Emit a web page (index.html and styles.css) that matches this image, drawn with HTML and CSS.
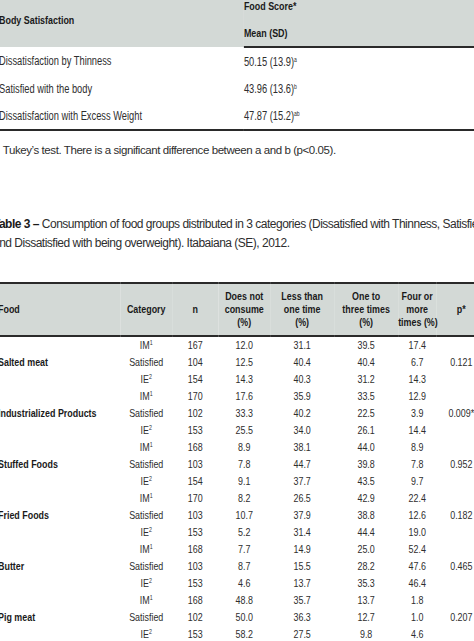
FILE: index.html
```html
<!DOCTYPE html>
<html>
<head>
<meta charset="utf-8">
<link rel="stylesheet" href="styles.css">
</head>
<body>
<div class="page">
  <div class="t1-wrap">
    <table class="t1">
      <colgroup><col class="t1-c1"><col class="t1-c2"></colgroup>
      <thead>
        <tr class="t1-h1"><th rowspan="2" class="t1-lbl">Body Satisfaction</th><th>Food Score*</th></tr>
        <tr class="t1-h2"><th>Mean (SD)</th></tr>
      </thead>
      <tbody>
        <tr><td>Dissatisfaction by Thinness</td><td>50.15 (13.9)<sup>a</sup></td></tr>
        <tr><td>Satisfied with the body</td><td>43.96 (13.6)<sup>b</sup></td></tr>
        <tr><td>Dissatisfaction with Excess Weight</td><td>47.87 (15.2)<sup>ab</sup></td></tr>
      </tbody>
    </table>
  </div>

  <p class="note">&nbsp;Tukey’s test. There is a significant difference between a and b (p&lt;0.05).</p>

  <p class="caption"><b>Table 3 –</b> Consumption of food groups distributed in 3 categories (Dissatisfied with Thinness, Satisfied with the body<br>and Dissatisfied with being overweight). Itabaiana (SE), 2012.</p>

  <div class="t3-wrap">
    <table class="t3">
      <colgroup>
        <col class="w-food"><col class="w-cat"><col class="w-n"><col class="w-dnc"><col class="w-less"><col class="w-one"><col class="w-four"><col class="w-p">
      </colgroup>
      <thead>
        <tr>
          <th class="food">Food</th>
          <th>Category</th>
          <th>n</th>
          <th>Does not<br>consume<br>(%)</th>
          <th>Less than<br>one time<br>(%)</th>
          <th>One to<br>three times<br>(%)</th>
          <th>Four or<br>more<br>times (%)</th>
          <th>p*</th>
        </tr>
      </thead>
      <tbody>
        <tr><td rowspan="3" class="food">Salted meat</td><td>IM<sup>1</sup></td><td>167</td><td>12.0</td><td>31.1</td><td>39.5</td><td>17.4</td><td rowspan="3">0.121</td></tr>
        <tr><td>Satisfied</td><td>104</td><td>12.5</td><td>40.4</td><td>40.4</td><td>6.7</td></tr>
        <tr><td>IE<sup>2</sup></td><td>154</td><td>14.3</td><td>40.3</td><td>31.2</td><td>14.3</td></tr>

        <tr><td rowspan="3" class="food">Industrialized Products</td><td>IM<sup>1</sup></td><td>170</td><td>17.6</td><td>35.9</td><td>33.5</td><td>12.9</td><td rowspan="3">0.009*</td></tr>
        <tr><td>Satisfied</td><td>102</td><td>33.3</td><td>40.2</td><td>22.5</td><td>3.9</td></tr>
        <tr><td>IE<sup>2</sup></td><td>153</td><td>25.5</td><td>34.0</td><td>26.1</td><td>14.4</td></tr>

        <tr><td rowspan="3" class="food">Stuffed Foods</td><td>IM<sup>1</sup></td><td>168</td><td>8.9</td><td>38.1</td><td>44.0</td><td>8.9</td><td rowspan="3">0.952</td></tr>
        <tr><td>Satisfied</td><td>103</td><td>7.8</td><td>44.7</td><td>39.8</td><td>7.8</td></tr>
        <tr><td>IE<sup>2</sup></td><td>154</td><td>9.1</td><td>37.7</td><td>43.5</td><td>9.7</td></tr>

        <tr><td rowspan="3" class="food">Fried Foods</td><td>IM<sup>1</sup></td><td>170</td><td>8.2</td><td>26.5</td><td>42.9</td><td>22.4</td><td rowspan="3">0.182</td></tr>
        <tr><td>Satisfied</td><td>103</td><td>10.7</td><td>37.9</td><td>38.8</td><td>12.6</td></tr>
        <tr><td>IE<sup>2</sup></td><td>153</td><td>5.2</td><td>31.4</td><td>44.4</td><td>19.0</td></tr>

        <tr><td rowspan="3" class="food">Butter</td><td>IM<sup>1</sup></td><td>168</td><td>7.7</td><td>14.9</td><td>25.0</td><td>52.4</td><td rowspan="3">0.465</td></tr>
        <tr><td>Satisfied</td><td>103</td><td>8.7</td><td>15.5</td><td>28.2</td><td>47.6</td></tr>
        <tr><td>IE<sup>2</sup></td><td>153</td><td>4.6</td><td>13.7</td><td>35.3</td><td>46.4</td></tr>

        <tr><td rowspan="3" class="food">Pig meat</td><td>IM<sup>1</sup></td><td>168</td><td>48.8</td><td>35.7</td><td>13.7</td><td>1.8</td><td rowspan="3">0.207</td></tr>
        <tr><td>Satisfied</td><td>102</td><td>50.0</td><td>36.3</td><td>12.7</td><td>1.0</td></tr>
        <tr><td>IE<sup>2</sup></td><td>153</td><td>58.2</td><td>27.5</td><td>9.8</td><td>4.6</td></tr>
      </tbody>
    </table>
  </div>
</div>
</body>
</html>
```

FILE: styles.css
```css
html, body {
  margin: 0;
  padding: 0;
  overflow: hidden;
  background: #ffffff;
}

body {
  width: 474px;
  height: 641px;
  font-family: "Liberation Sans", Arial, sans-serif;
  color: #2e2e2e;
}

.page {
  margin-top: -7px;
}

table {
  border-collapse: collapse;
  border-spacing: 0;
  table-layout: fixed;
}

th, td {
  padding: 0;
  white-space: nowrap;
}

sup {
  font-size: 6.5px;
  line-height: 0;
  vertical-align: 4px;
}

/* ---- Table 2 (top), set in a condensed face ---- */
.t1-wrap {
  width: 614px;
  margin-left: -1px;
  transform: scaleX(0.775);
  transform-origin: 0 0;
}
.t1 {
  width: 614px;
  font-size: 12px;
}
.t1-c1 { width: 316px; }
.t1-c2 { width: 298px; }

.t1 thead { background: #d3d9d6; }
.t1 th {
  text-align: left;
  font-weight: bold;
  font-size: 11.5px;
  color: #1a1a1a;
  vertical-align: middle;
}
.t1-h1 { height: 26px; }
.t1-h2 { height: 28px; }
.t1-h2 th { border-bottom: 2px solid #2a2a2a; }

.t1 td {
  height: 27px;
  vertical-align: middle;
  text-align: left;
}
.t1 tbody tr:last-child td { border-bottom: 2px solid #2a2a2a; }

.note {
  margin: 11px 0 0 0;
  font-size: 11.5px;
  line-height: 16px;
  letter-spacing: -0.42px;
  white-space: nowrap;
}

.caption {
  margin: 57px 0 0 -7px;
  font-size: 12px;
  line-height: 19px;
  letter-spacing: -0.5px;
  white-space: nowrap;
  color: #2e2e2e;
}
.caption b { color: #1a1a1a; }

/* ---- Table 3, set in a condensed face ---- */
.t3-wrap {
  width: 603px;
  margin-left: -2px;
  margin-top: 29px;
  transform: scaleX(0.81);
  transform-origin: 0 0;
}
.t3 {
  width: 603px;
  font-size: 11px;
  border-top: 2px solid #2a2a2a;
}
.w-food { width: 151px; }
.w-cat { width: 64px; }
.w-n { width: 57px; }
.w-dnc { width: 64px; }
.w-less { width: 79px; }
.w-one { width: 79px; }
.w-four { width: 47px; }
.w-p { width: 62px; }

.t3 thead { background: #d3d9d6; }
.t3 th {
  height: 51px;
  font-weight: bold;
  font-size: 11px;
  line-height: 13px;
  color: #1a1a1a;
  text-align: center;
  vertical-align: middle;
  border-bottom: 2px solid #2a2a2a;
}
.t3 td {
  height: 17px;
  line-height: 17px;
  text-align: center;
  vertical-align: middle;
}
.t3 .food {
  text-align: left;
  font-weight: bold;
  color: #1a1a1a;
}
```
